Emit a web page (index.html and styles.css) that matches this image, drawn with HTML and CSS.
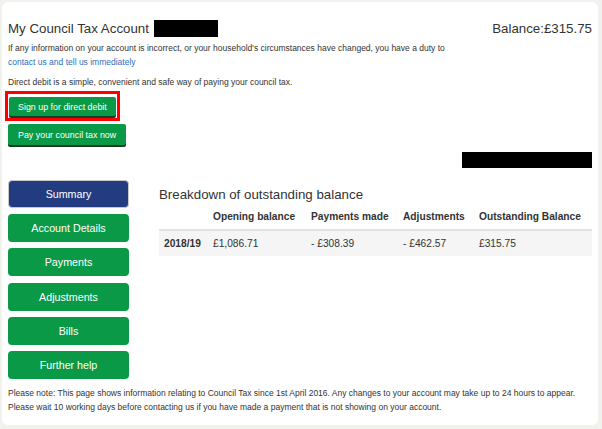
FILE: index.html
```html
<!DOCTYPE html>
<html lang="en">
<head>
  <meta charset="UTF-8">
  <meta name="viewport" content="width=device-width, initial-scale=1.0">
  <title>My Council Tax Account</title>
  <link rel="stylesheet" href="styles.css">
</head>
<body>
  <div class="card">
    <div class="header">
      <h1>My Council Tax Account <span class="redacted name"></span></h1>
      <div class="balance">Balance:£315.75</div>
    </div>

    <p class="intro">If any information on your account is incorrect, or your household's circumstances have changed, you have a duty to<br><a href="#">contact us and tell us immediately</a></p>
    <p class="dd-text">Direct debit is a simple, convenient and safe way of paying your council tax.</p>

    <div class="actions">
      <span class="highlight">
        <button class="btn btn-dd">Sign up for direct debit</button>
      </span>
      <button class="btn btn-pay">Pay your council tax now</button>
    </div>

    <div class="ref-row"><span class="redacted ref"></span></div>

    <div class="main">
      <nav class="side-nav">
        <a href="#" class="nav-item active">Summary</a>
        <a href="#" class="nav-item">Account Details</a>
        <a href="#" class="nav-item">Payments</a>
        <a href="#" class="nav-item">Adjustments</a>
        <a href="#" class="nav-item">Bills</a>
        <a href="#" class="nav-item">Further help</a>
      </nav>

      <div class="content">
        <h2>Breakdown of outstanding balance</h2>
        <table class="breakdown">
          <colgroup>
            <col style="width: 49px">
            <col style="width: 98px">
            <col style="width: 92px">
            <col style="width: 76px">
            <col>
          </colgroup>
          <thead>
            <tr>
              <th></th>
              <th>Opening balance</th>
              <th>Payments made</th>
              <th>Adjustments</th>
              <th>Outstanding Balance</th>
            </tr>
          </thead>
          <tbody>
            <tr>
              <th>2018/19</th>
              <td>£1,086.71</td>
              <td>- £308.39</td>
              <td>- £462.57</td>
              <td>£315.75</td>
            </tr>
          </tbody>
        </table>
      </div>
    </div>

    <p class="note">Please note: This page shows information relating to Council Tax since 1st April 2016. Any changes to your account may take up to 24 hours to appear.<br>Please wait 10 working days before contacting us if you have made a payment that is not showing on your account.</p>
  </div>
</body>
</html>
```

FILE: styles.css
```css
body {
  margin: 0;
  padding: 2px;
  background: #f1f1ed;
  font-family: "Liberation Sans", Arial, sans-serif;
  color: #333;
}
.card {
  width: 596px;
  height: 423px;
  box-sizing: border-box;
  background: #fff;
  border-radius: 6px;
  padding: 16px 6px 0;
}
.header {
  display: flex;
  justify-content: space-between;
  align-items: center;
  height: 21px;
}
h1 {
  margin: 0;
  font-size: 13.3px;
  font-weight: normal;
  display: flex;
  align-items: center;
  gap: 5px;
}
.balance {
  font-size: 13.3px;
}
.redacted {
  display: inline-block;
  background: #000;
}
.name {
  width: 64px;
  height: 17px;
}
.intro, .dd-text {
  font-size: 8.5px;
  line-height: 14px;
  margin: 2px 0 0;
}
.dd-text {
  margin-top: 6px;
}
.intro a {
  color: #2a70bd;
  text-decoration: none;
}
.actions {
  display: flex;
  flex-direction: column;
  align-items: flex-start;
  margin-top: 2px;
  gap: 3px;
}
.highlight {
  display: block;
  border: 3px solid #ff0000;
  padding: 3px 1px 2px;
  margin-left: -3px;
}
.btn {
  display: block;
  font-family: inherit;
  font-size: 8.9px;
  color: #fff;
  background: #0a9a47;
  border: none;
  border-radius: 2px;
  box-shadow: 0 2px 0 #1b3a22;
  padding: 0 9px;
  cursor: pointer;
}
.btn-dd {
  height: 19px;
}
.btn-pay {
  height: 21px;
  padding: 0 10px;
}
.ref-row {
  display: flex;
  justify-content: flex-end;
  margin-top: 7px;
}
.ref {
  width: 130px;
  height: 16px;
}
.main {
  display: flex;
  gap: 30px;
  margin-top: 12px;
}
.side-nav {
  width: 121px;
  display: flex;
  flex-direction: column;
  gap: 6.2px;
}
.nav-item {
  height: 28px;
  display: flex;
  align-items: center;
  justify-content: center;
  background: #0a9a47;
  color: #fff;
  font-size: 10.7px;
  text-decoration: none;
  border-radius: 4px;
  box-sizing: border-box;
}
.nav-item.active {
  background: #233b80;
  border: 1px solid #c8c8c8;
}
.content {
  flex: 1;
}
h2 {
  margin: 6px 0 0;
  font-size: 13.3px;
  font-weight: normal;
  line-height: 18px;
}
.breakdown {
  width: 100%;
  table-layout: fixed;
  border-collapse: collapse;
  font-size: 10.2px;
}
.breakdown th, .breakdown td {
  text-align: left;
  padding: 0 0 0 5px;
  height: 25px;
}
.breakdown thead th {
  border-bottom: 2px solid #e2e2e2;
}
.breakdown tbody tr {
  background: #f5f5f5;
}
.note {
  font-size: 8.5px;
  line-height: 14px;
  margin: 7px 0 0;
}
```
